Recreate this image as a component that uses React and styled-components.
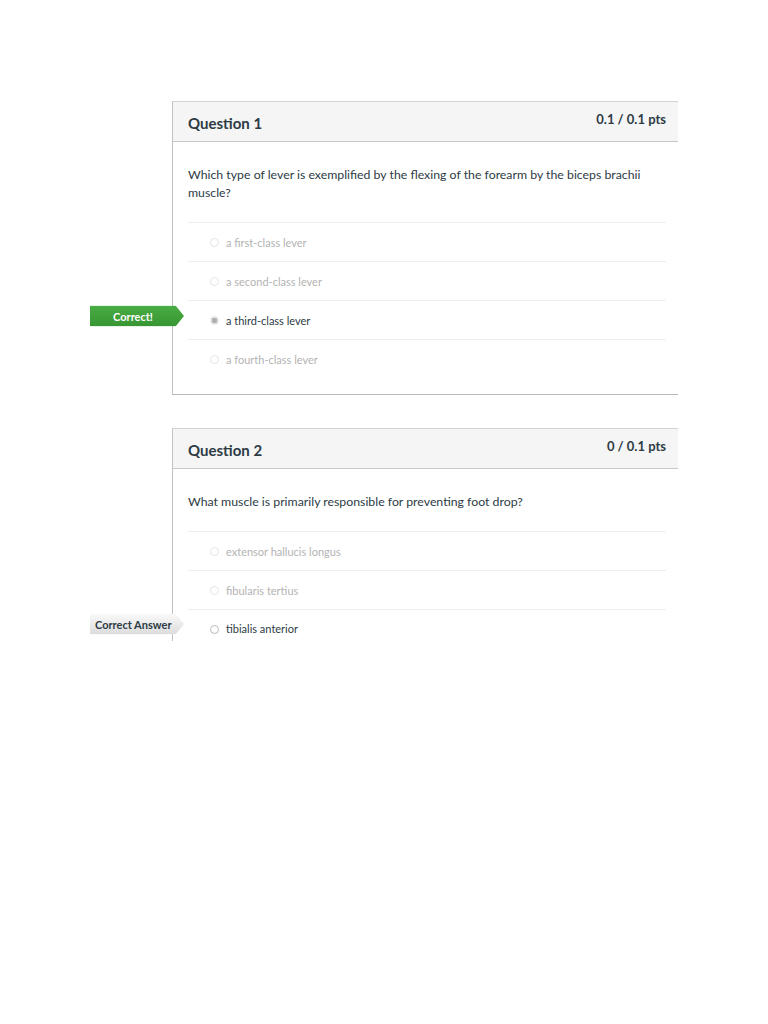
import React from "react";
import styled, { createGlobalStyle, css } from "styled-components";

const GlobalStyle = createGlobalStyle`
  html, body {
    margin: 0;
    padding: 0;
    background: #ffffff;
    font-family: Lato, "Open Sans", "Liberation Sans", sans-serif;
  }
`;

const Page = styled.div`
  width: 768px;
  min-height: 1024px;
  padding: 101px 0 0 172px;
  box-sizing: border-box;
  display: flex;
  flex-direction: column;
  gap: 33px;
`;

const Card = styled.section`
  width: 506px;
  border-top: 1px solid #d3d3d3;
  border-left: 1px solid #c2c2c2;
  border-bottom: ${p => (p.$open ? "none" : "1px solid #b9b9b9")};
  box-sizing: border-box;
`;

const Header = styled.header`
  height: 40px;
  display: flex;
  justify-content: space-between;
  align-items: flex-start;
  padding: 0 12px 0 15px;
  background: #f5f5f5;
  border-bottom: 1px solid #c4c8cb;
  box-sizing: border-box;
`;

const Title = styled.h3`
  margin: 12px 0 0;
  font-size: 15px;
  font-weight: 700;
  line-height: 18px;
  color: #2d3b45;
`;

const Points = styled.span`
  margin-top: 9px;
  font-size: 13px;
  font-weight: 700;
  line-height: 16px;
  color: #2d3b45;
`;

const Body = styled.div`
  padding: ${p => (p.$open ? "0 12px 0 15px" : "0 12px 16px 15px")};
`;

const Prompt = styled.p`
  margin: 24px 0 20px;
  font-size: 12.3px;
  line-height: 18px;
  color: #2d3b45;
`;

const Answer = styled.div`
  position: relative;
  height: 38px;
  display: flex;
  align-items: center;
  gap: 7px;
  padding-left: 22px;
  border-top: 1px solid #eeeeee;
  font-size: 11px;
  color: ${p => (p.$picked || p.$right ? "#2d3b45" : "#b3b3b3")};

  ${p =>
    p.$cut &&
    css`
      height: 32px;
      align-items: flex-start;
      padding-top: 12px;
      box-sizing: border-box;
    `}
`;

const Radio = styled.span`
  width: 9px;
  height: 9px;
  border-radius: 50%;
  box-sizing: border-box;
  flex: none;
  border: 1px solid ${p => (p.$right ? "#b8b8b8" : "#e4e4e4")};
  background: ${p =>
    p.$picked ? "radial-gradient(circle, #b0b0b0 0 55%, #e6e6e6 60%)" : "#fff"};
  margin-top: ${p => (p.$cut ? "3px" : "0")};
`;

const badgeBase = css`
  position: absolute;
  right: calc(100% + 4px);
  top: calc(50% - 4px);
  transform: translateY(-50%);
  width: 94px;
  height: 21px;
  display: flex;
  align-items: center;
  font-size: 11px;
  font-weight: 700;
  box-sizing: border-box;
  clip-path: polygon(0 0, 91% 0, 100% 50%, 91% 100%, 0 100%);
`;

const CorrectBadge = styled.span`
  ${badgeBase};
  justify-content: center;
  padding-right: 8px;
  color: #ffffff;
  background: linear-gradient(#4aad44, #379532);
`;

const AnswerBadge = styled.span`
  ${badgeBase};
  padding-left: 5px;
  color: #2d3b45;
  background: linear-gradient(#fafafa, #dcdcdc);
  ${p => p.$cut && css`top: 14px;`}
`;

const questions = [
  {
    title: "Question 1",
    points: "0.1 / 0.1 pts",
    prompt:
      "Which type of lever is exemplified by the flexing of the forearm by the biceps brachii muscle?",
    answers: [
      { text: "a first-class lever" },
      { text: "a second-class lever" },
      { text: "a third-class lever", picked: true, badge: "correct" },
      { text: "a fourth-class lever" },
    ],
  },
  {
    title: "Question 2",
    points: "0 / 0.1 pts",
    prompt: "What muscle is primarily responsible for preventing foot drop?",
    open: true,
    answers: [
      { text: "extensor hallucis longus" },
      { text: "fibularis tertius" },
      { text: "tibialis anterior", right: true, badge: "answer" },
    ],
  },
];

const Question = ({ q }) => (
  <Card $open={q.open}>
    <Header>
      <Title>{q.title}</Title>
      <Points>{q.points}</Points>
    </Header>
    <Body $open={q.open}>
      <Prompt>{q.prompt}</Prompt>
      {q.answers.map((a, i) => {
        const cut = q.open && i === q.answers.length - 1;
        return (
          <Answer key={a.text} $picked={a.picked} $right={a.right} $cut={cut}>
            {a.badge === "correct" && <CorrectBadge>Correct!</CorrectBadge>}
            {a.badge === "answer" && (
              <AnswerBadge $cut={cut}>Correct Answer</AnswerBadge>
            )}
            <Radio $picked={a.picked} $right={a.right} $cut={cut} />
            {a.text}
          </Answer>
        );
      })}
    </Body>
  </Card>
);

const App = () => (
  <>
    <GlobalStyle />
    <Page>
      {questions.map(q => (
        <Question key={q.title} q={q} />
      ))}
    </Page>
  </>
);

export default App;
